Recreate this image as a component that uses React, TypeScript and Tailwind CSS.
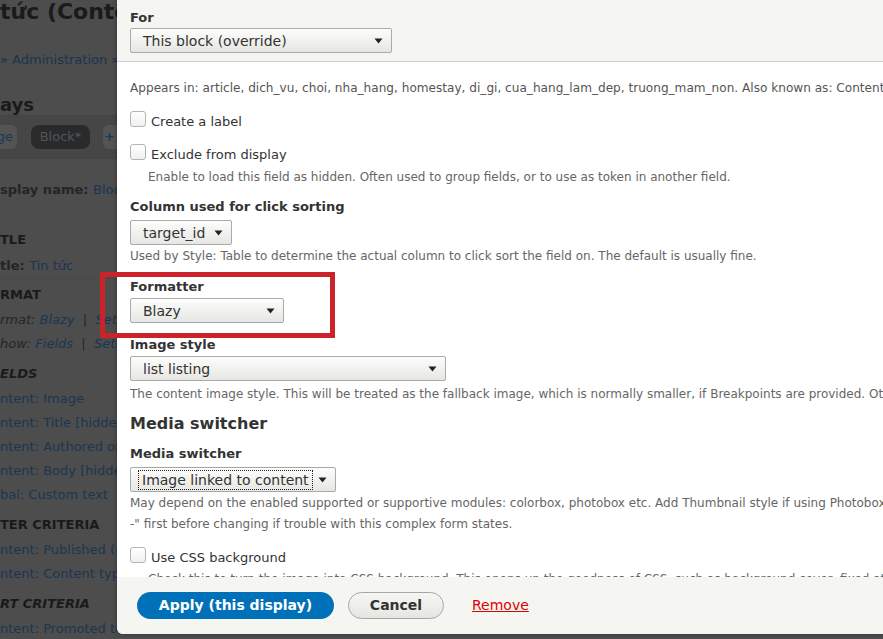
import React from "react";

function Arrow() {
  return (
    <svg width="9" height="6" viewBox="0 0 9 6" className="shrink-0">
      <path d="M0.5 0.5 L8.5 0.5 L4.5 5.5 Z" fill="#222" />
    </svg>
  );
}

function Select({ className, children }: { className: string; children: React.ReactNode }) {
  return (
    <div
      className={
        "flex h-[25px] shrink-0 items-center justify-between rounded-[2px] border border-[#aaaaaa] bg-gradient-to-b from-[#fdfdfc] to-[#e6e6e2] pl-[12px] pr-[8px] text-[14px] leading-[18px] text-[#333] " +
        className
      }
    >
      {children}
      <Arrow />
    </div>
  );
}

function Checkbox() {
  return (
    <div className="h-[16px] w-[16px] shrink-0 rounded-[3px] border border-[#b4b4b4] bg-gradient-to-b from-white to-[#f0f0ee]" />
  );
}

function CheckRow({ label, className = "" }: { label: string; className?: string }) {
  return (
    <div className={"flex h-[18px] items-start gap-[5px] " + className}>
      <Checkbox />
      <span className="mt-[2px] whitespace-nowrap text-[13px] leading-[18px] text-[#333]">{label}</span>
    </div>
  );
}

function Label({ children, className = "" }: { children: React.ReactNode; className?: string }) {
  return <div className={"text-[13px] font-bold leading-[18px] text-[#333] " + className}>{children}</div>;
}

function Desc({ children, className = "" }: { children: React.ReactNode; className?: string }) {
  return (
    <div className={"whitespace-nowrap text-[12px] leading-[18px] text-[#666] " + className}>{children}</div>
  );
}

function BgRow({ children, className = "" }: { children: React.ReactNode; className?: string }) {
  return <div className={"whitespace-nowrap text-[13px] leading-[24px] " + className}>{children}</div>;
}

export default function App() {
  return (
    <div className="relative h-[639px] w-[883px] overflow-hidden bg-[#4d4d4d] font-['DejaVu_Sans',sans-serif]">
      {/* Page behind the overlay */}
      <div className="w-[117px] overflow-hidden text-[#1c1c1c]">
        <div className="mt-[-1px] whitespace-nowrap text-[22px] font-bold leading-[26px] text-[#1a1a1a]">
          tức (Content)
        </div>
        <div className="mt-[26px] whitespace-nowrap text-[13px] leading-[18px] text-[#1a344d]">
          » Administration »
        </div>
        <div className="mt-[24px] whitespace-nowrap text-[18px] font-bold leading-[24px] text-[#1a1a1a]">ays</div>
        <div className="mt-[-2px] flex h-[44px] items-center border-y border-[#444] bg-[#464646]">
          <div className="ml-[-6px] flex h-[24px] w-[23px] shrink-0 items-center justify-end rounded-[6px] bg-[#545452] pr-[4px] text-[13px] text-[#1a3a57]">
            ge
          </div>
          <div className="ml-[14px] flex h-[24px] w-[59px] shrink-0 items-center justify-center rounded-[8px] bg-[#2a2a2a] text-[13px] text-[#4e575e]">
            Block*
          </div>
          <div className="ml-[13px] flex h-[24px] w-[30px] shrink-0 items-center rounded-[6px] bg-[#545452] pl-[1px] text-[13px] font-bold text-[#1a3a57]">
            +
          </div>
        </div>
        <BgRow className="mt-[19px]">
          <span className="font-bold text-[#252525]">splay name: </span>
          <span className="text-[#1a3652]">Block</span>
        </BgRow>
        <BgRow className="mt-[26px] font-bold text-[#1a1a1a]">TLE</BgRow>
        <BgRow className="mt-[2px] border-b border-[#474747]">
          <span className="font-bold text-[#252525]">tle: </span>
          <span className="text-[#1a3652]">Tin tức</span>
        </BgRow>
        <BgRow className="mt-[4px] font-bold text-[#1a1a1a]">RMAT</BgRow>
        <BgRow className="mt-[1px] italic">
          <span className="text-[#252525]">rmat: </span>
          <span className="text-[#1a3652]">Blazy</span>
          <span className="text-[#252525]">&nbsp;&nbsp;|&nbsp;&nbsp;</span>
          <span className="text-[#1a3652]">Settings</span>
        </BgRow>
        <BgRow className="italic">
          <span className="text-[#252525]">how: </span>
          <span className="text-[#1a3652]">Fields</span>
          <span className="text-[#252525]">&nbsp;&nbsp;|&nbsp;&nbsp;</span>
          <span className="text-[#1a3652]">Settings</span>
        </BgRow>
        <BgRow className="mt-[6px] font-bold italic text-[#1a1a1a]">ELDS</BgRow>
        <BgRow className="mt-[1px] text-[#1a3652]">ntent: Image</BgRow>
        <BgRow className="text-[#1a3652]">ntent: Title [hidden]</BgRow>
        <BgRow className="text-[#1a3652]">ntent: Authored on</BgRow>
        <BgRow className="text-[#1a3652]">ntent: Body [hidden]</BgRow>
        <BgRow className="text-[#1a3652]">bal: Custom text</BgRow>
        <BgRow className="mt-[6px] font-bold text-[#1a1a1a]">TER CRITERIA</BgRow>
        <BgRow className="mt-[1px] text-[#1a3652]">ntent: Published (= Yes)</BgRow>
        <BgRow className="text-[#1a3652]">ntent: Content type</BgRow>
        <BgRow className="mt-[6px] font-bold italic text-[#1a1a1a]">RT CRITERIA</BgRow>
        <BgRow className="mt-[1px] text-[#1a3652]">ntent: Promoted to front page</BgRow>
      </div>

      {/* Dialog */}
      <div className="absolute left-[117px] top-0 flex h-[634px] w-[800px] flex-col overflow-hidden rounded-bl-[6px] bg-white shadow-[0_0_4px_rgba(0,0,0,0.4)]">
        <div className="h-[62px] shrink-0 border-b border-[#cfcfcb] bg-[#f5f5f2] pl-[13px] pt-[9px]">
          <Label>For</Label>
          <Select className="mt-[1px] w-[262px]">This block (override)</Select>
        </div>

        <div className="min-h-0 flex-1 overflow-hidden pl-[13px] pt-[17px]">
          <div className="whitespace-nowrap text-[12.1px] leading-[18px] text-[#555]">
            Appears in: article, dich_vu, choi, nha_hang, homestay, di_gi, cua_hang_lam_dep, truong_mam_non. Also
            known as: Content: Image
          </div>

          <CheckRow className="mt-[14px]" label="Create a label" />
          <CheckRow className="mt-[15px]" label="Exclude from display" />
          <Desc className="ml-[18px] mt-[6px]">
            Enable to load this field as hidden. Often used to group fields, or to use as token in another field.
          </Desc>

          <Label className="mt-[12px]">Column used for click sorting</Label>
          <Select className="mt-[4px] w-[102px]">target_id</Select>
          <Desc className="mt-[2px]">
            Used by Style: Table to determine the actual column to click sort the field on. The default is usually
            fine.
          </Desc>

          <Label className="mt-[13px]">Formatter</Label>
          <Select className="mt-[2px] w-[154px]">Blazy</Select>

          <Label className="mt-[13px]">Image style</Label>
          <Select className="mt-[2px] w-[316px]">list listing</Select>
          <Desc className="mt-[4px]">
            The content image style. This will be treated as the fallback image, which is normally smaller, if
            Breakpoints are provided. Otherwise this is the only image displayed.
          </Desc>

          <div className="mt-[10px] text-[16px] font-bold leading-[22px] text-[#333]">Media switcher</div>

          <Label className="mt-[10px]">Media switcher</Label>
          <div className="mt-[4px] flex h-[25px] w-[206px] items-center justify-between rounded-[2px] border border-[#aaaaaa] bg-gradient-to-b from-[#fdfdfc] to-[#e6e6e2] pl-[8px] pr-[8px] text-[14px] leading-[18px] text-[#333]">
            <span className="whitespace-nowrap px-[3px] outline-1 outline-dotted outline-[#222]">
              Image linked to content
            </span>
            <Arrow />
          </div>
          <div className="mt-[1px] whitespace-nowrap text-[12px] leading-[21px] text-[#666]">
            <div>
              May depend on the enabled supported or supportive modules: colorbox, photobox etc. Add Thumbnail style
              if using Photobox. Try selecting "- None
            </div>
            <div>-" first before changing if trouble with this complex form states.</div>
          </div>

          <CheckRow className="mt-[12px]" label="Use CSS background" />
          <Desc className="ml-[18px] mt-[5px]">
            Check this to turn the image into CSS background. This opens up the goodness of CSS, such as background
            cover, fixed attachment, etc.
          </Desc>
        </div>

        <div className="flex h-[57px] shrink-0 items-start bg-[#f5f5f2] pl-[20px] pt-[15px]">
          <div className="flex h-[27px] w-[197px] items-center justify-center rounded-full bg-[#0071b8] text-[14px] font-bold text-white">
            Apply (this display)
          </div>
          <div className="ml-[14px] flex h-[27px] w-[96px] items-center justify-center rounded-full border border-[#a6a6a6] bg-gradient-to-b from-[#f6f6f3] to-[#e6e6e1] text-[14px] font-bold text-[#333]">
            Cancel
          </div>
          <div className="ml-[28px] flex h-[27px] items-center text-[14px] text-[#e00000] underline">Remove</div>
        </div>
      </div>

      {/* Annotation box */}
      <div className="absolute left-[100px] top-[272px] h-[66px] w-[235px] border-[5px] border-[#cc2229]" />
    </div>
  );
}
